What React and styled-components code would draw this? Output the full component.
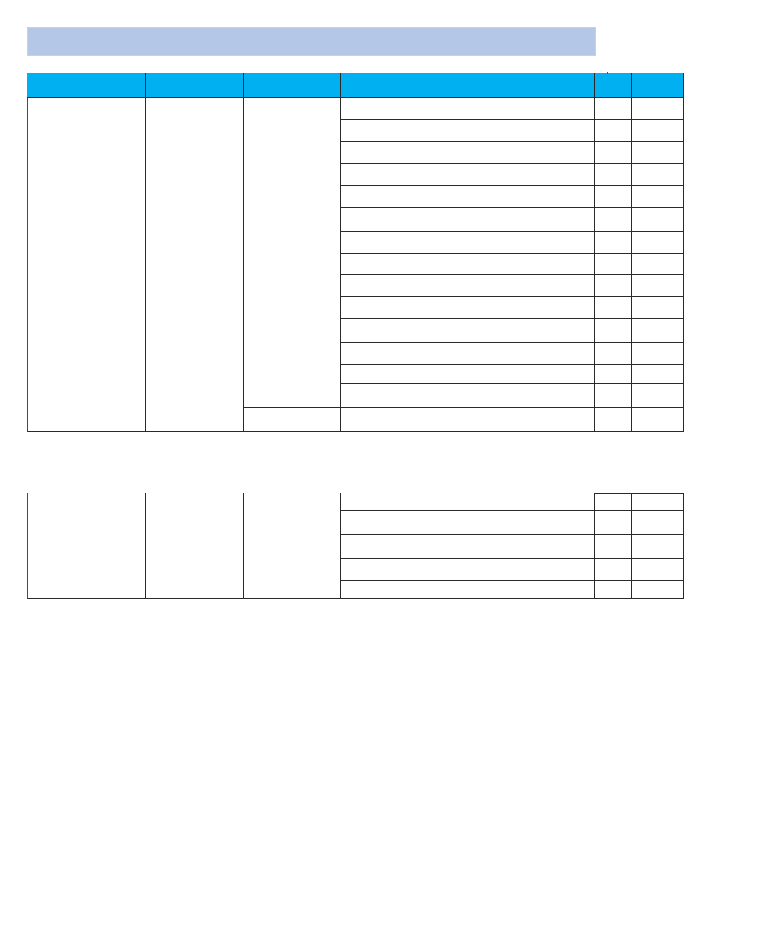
import React from "react";
import styled, { createGlobalStyle } from "styled-components";

const line = "#2a2a2a";
const columns = "119px 98px 97px 254px 37px 52px";

const firstRows = [22, 22, 22, 22, 22, 24, 22, 21, 22, 22, 24, 22, 19, 24, 24];
const secondRows = [18, 24, 24, 22, 18];

const GlobalStyle = createGlobalStyle`
  body {
    margin: 0;
    background: #ffffff;
    font-family: "Liberation Sans", Arial, sans-serif;
  }
`;

const Page = styled.div`
  display: flex;
  flex-direction: column;
  align-items: flex-start;
  padding: 27px 0 0 27px;
`;

const Banner = styled.div`
  width: 569px;
  height: 29px;
  box-sizing: border-box;
  background: #b4c7e7;
  border: 1px solid #c3d2ec;
`;

const Sheet = styled.div`
  display: grid;
  grid-template-columns: ${columns};
  grid-template-rows: ${(p) => p.$rows.map((r) => r + "px").join(" ")};
  margin-top: ${(p) => p.$gap}px;
`;

const HeaderCell = styled.div`
  position: relative;
  box-sizing: border-box;
  background: #00b0f0;
  border-right: 1px solid ${line};
  border-bottom: 1px solid ${line};

  ${(p) =>
    p.$tick &&
    `
    &::before {
      content: "";
      position: absolute;
      left: 12px;
      top: -1px;
      width: 1px;
      height: 2px;
      background: #555;
    }
  `}
`;

const Cell = styled.div`
  box-sizing: border-box;
  grid-column: ${(p) => p.$col};
  grid-row: ${(p) => p.$row} / span ${(p) => p.$span || 1};
  border-right: 1px solid ${line};
  border-bottom: 1px solid ${line};
  border-left: ${(p) => (p.$first ? `1px solid #4a4a4a` : "none")};
  border-top: ${(p) => (p.$top ? `1px solid ${line}` : "none")};
`;

function DetailRows({ count, from = 1, topFrom }) {
  const cells = [];
  for (let i = 0; i < count; i++) {
    const row = from + i;
    const top = topFrom !== undefined && i === 0;
    cells.push(<Cell key={`d${row}`} $col={4} $row={row} />);
    cells.push(<Cell key={`a${row}`} $col={5} $row={row} $top={top} />);
    cells.push(<Cell key={`b${row}`} $col={6} $row={row} $top={top} />);
  }
  return cells;
}

export default function App() {
  return (
    <>
      <GlobalStyle />
      <Page>
        <Banner />

        <Sheet $rows={[25]} $gap={17}>
          <HeaderCell />
          <HeaderCell />
          <HeaderCell />
          <HeaderCell />
          <HeaderCell $tick />
          <HeaderCell />
        </Sheet>

        <Sheet $rows={firstRows} $gap={0}>
          <Cell $col={1} $row={1} $span={15} $first />
          <Cell $col={2} $row={1} $span={15} />
          <Cell $col={3} $row={1} $span={14} />
          <Cell $col={3} $row={15} />
          <DetailRows count={15} />
        </Sheet>

        <Sheet $rows={secondRows} $gap={61}>
          <Cell $col={1} $row={1} $span={5} $first />
          <Cell $col={2} $row={1} $span={5} />
          <Cell $col={3} $row={1} $span={5} />
          <DetailRows count={5} topFrom={1} />
        </Sheet>
      </Page>
    </>
  );
}
